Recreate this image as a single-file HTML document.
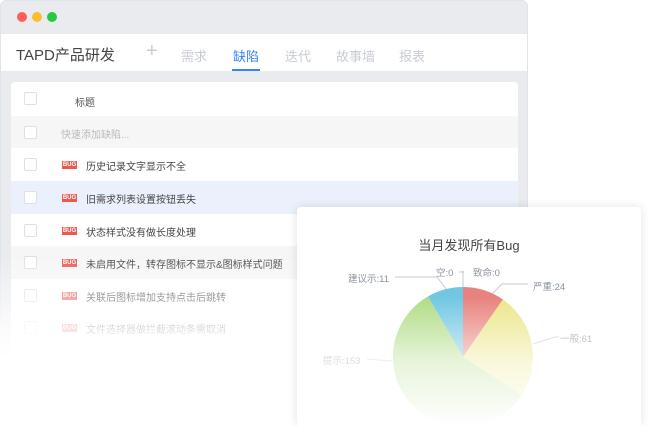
<!DOCTYPE html>
<html><head><meta charset="utf-8"><style>
*{margin:0;padding:0;box-sizing:border-box}
html,body{width:652px;height:426px;overflow:hidden}
body{background:#fff;position:relative;font-family:"Liberation Sans","Noto Sans CJK SC",sans-serif}
.win{position:absolute;left:0;top:0;width:528px;height:420px;background:#e9ebef;border:1px solid #e1e4ea;border-radius:6px;overflow:hidden}
.dot{position:absolute;top:11px;width:10px;height:10px;border-radius:50%}
.nav{position:absolute;left:0;top:33px;width:526px;height:37px;background:#fff}
.nav span{position:absolute;top:11px;font-size:13px;color:#c8ccd3}
.card{position:absolute;left:10px;top:81px;width:507px;height:330px;background:#fff;border-radius:4px;overflow:hidden}
.row{position:absolute;left:0;width:507px;height:33px;font-size:10px;color:#444}
.cb{position:absolute;left:13px;top:10px;width:13px;height:13px;border:1px solid #dde0e6;border-radius:2px;background:#fff}
.bug{position:absolute;left:51px;top:13px;width:15px;height:8px;background:#f0584f;color:#fff;font-size:6px;line-height:8px;text-align:center;font-weight:bold;overflow:hidden}
.t{position:absolute;left:75px;top:10px}
.fade{position:absolute;left:0;top:255px;width:652px;height:171px;background:linear-gradient(rgba(255,255,255,0),rgba(255,255,255,.85) 45%,#fff 60%)}
.chart{position:absolute;left:297px;top:207px;width:344px;height:219px;background:#fff;border-radius:4px;box-shadow:0 0 10px rgba(0,0,0,.12)}
</style></head><body>
<div class="win">
<div class="dot" style="left:16px;background:#fe5f57"></div>
<div class="dot" style="left:31px;background:#febc2e"></div>
<div class="dot" style="left:46px;background:#28c840"></div>
<div class="nav">
<span style="left:15px;top:10px;font-size:15px;color:#444">TAPD产品研发</span>
<span style="left:145px;top:6px;font-size:20px;color:#c8ccd3">+</span>
<span style="left:180px;top:12px">需求</span>
<span style="left:232px;top:12px;color:#3b82f6">缺陷</span>
<div style="position:absolute;left:231px;top:35px;width:28px;height:2px;background:#3b82f6"></div>
<span style="left:284px;top:12px">迭代</span>
<span style="left:335px;top:12px">故事墙</span>
<span style="left:398px;top:12px">报表</span>
</div>
<div class="card">
<div class="row" style="top:0"><div class="cb"></div><span class="t" style="left:64px;color:#555;top:12px">标题</span></div>
<div class="row" style="top:34px;height:32px;background:#f6f6f6"><div class="cb"></div><span class="t" style="left:50px;color:#bbb;top:10px">快速添加缺陷...</span></div>
<div class="row" style="top:66px"><div class="cb"></div><div class="bug">BUG</div><span class="t">历史记录文字显示不全</span></div>
<div class="row" style="top:99px;background:#ebf1fc"><div class="cb"></div><div class="bug">BUG</div><span class="t">旧需求列表设置按钮丢失</span></div>
<div class="row" style="top:132px"><div class="cb"></div><div class="bug">BUG</div><span class="t">状态样式没有做长度处理</span></div>
<div class="row" style="top:164px;background:#f6f6f6"><div class="cb"></div><div class="bug">BUG</div><span class="t">未启用文件，转存图标不显示&amp;图标样式问题</span></div>
<div class="row" style="top:197px"><div class="cb"></div><div class="bug">BUG</div><span class="t">关联后图标增加支持点击后跳转</span></div>
<div class="row" style="top:229px"><div class="cb"></div><div class="bug">BUG</div><span class="t">文件选择器做拦截滚动条需取消</span></div>
</div>
</div>
<div class="fade"></div>
<div class="chart">
<div style="position:absolute;left:0;width:344px;top:28px;text-align:center;font-size:13px;color:#444">当月发现所有Bug</div>
<svg width="344" height="219" style="position:absolute;left:0;top:0" font-family="Liberation Sans,Noto Sans CJK SC,sans-serif" font-size="9.5" fill="#8a93a0">
<g stroke="#c5cad3" fill="none" stroke-width="1">
<path d="M166 81V64M162 65h5M98 70h42l10 13M195 87l10-10h26M236 137l22-7h4M70 152l25 2"/>
</g>
<text x="139" y="69">空:0</text><text x="176" y="69">致命:0</text>
<text x="51" y="75">建议示:11</text><text x="236" y="83">严重:24</text>
<text x="263" y="135">一般:61</text><text x="26" y="157">提示:153</text>
<g transform="translate(166 150)">
<path d="M0 0V-70A70 70 0 0 1 39.9-57.5Z" fill="#e8827d"/>
<path d="M0 0L39.9-57.5A70 70 0 0 1 58.8 38Z" fill="#ece688"/>
<path d="M0 0L58.8 38A70 70 0 1 1-35-60.6Z" fill="#b0dc85"/>
<path d="M0 0L-35-60.6A70 70 0 0 1 0-70Z" fill="#71c7e2"/>
</g>
</svg>
<div style="position:absolute;left:0;top:90px;width:344px;height:129px;background:linear-gradient(rgba(255,255,255,0),rgba(255,255,255,.7) 50%,#fff)"></div>
</div>
</body></html>
